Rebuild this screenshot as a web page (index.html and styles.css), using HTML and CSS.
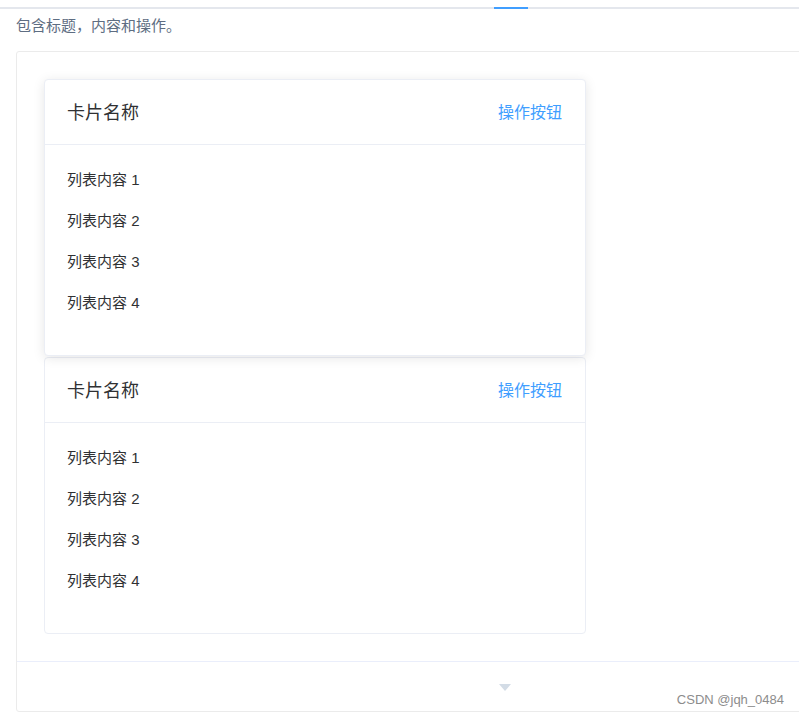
FILE: index.html
```html
<!DOCTYPE html>
<html lang="zh-CN">
<head>
<meta charset="utf-8">
<title>Card</title>
<link rel="stylesheet" href="styles.css">
</head>
<body>
<div class="tabs-bar"><span class="tab-ink"></span></div>
<p class="desc">包含标题，内容和操作。</p>
<div class="demo">
  <div class="source">
    <div class="card shadow">
      <div class="card-header">
        <span class="card-title">卡片名称</span>
        <span class="card-btn">操作按钮</span>
      </div>
      <div class="card-body">
        <div class="item">列表内容 1</div>
        <div class="item">列表内容 2</div>
        <div class="item">列表内容 3</div>
        <div class="item">列表内容 4</div>
      </div>
    </div>
    <div class="card second">
      <div class="card-header">
        <span class="card-title">卡片名称</span>
        <span class="card-btn">操作按钮</span>
      </div>
      <div class="card-body">
        <div class="item">列表内容 1</div>
        <div class="item">列表内容 2</div>
        <div class="item">列表内容 3</div>
        <div class="item">列表内容 4</div>
      </div>
    </div>
  </div>
  <div class="control"><span class="caret"></span></div>
</div>
<div class="watermark">CSDN @jqh_0484</div>
</body>
</html>
```
FILE: styles.css
```css
html, body {
  margin: 0;
  padding: 0;
  background: #fff;
  overflow: hidden;
}
body {
  font-family: "Liberation Sans", "Noto Sans CJK SC", sans-serif;
  color: #303133;
  width: 799px;
  height: 717px;
  position: relative;
}
.tabs-bar {
  height: 7px;
  border-bottom: 2px solid #e4e7ed;
  position: relative;
}
.tab-ink {
  position: absolute;
  left: 494px;
  bottom: -2px;
  width: 34px;
  height: 2px;
  background: #409eff;
}
.desc {
  margin: 6px 0 14px 16px;
  font-size: 15px;
  line-height: 22px;
  color: #5e6d82;
}
.demo {
  margin-left: 16px;
  width: 978px;
  box-sizing: border-box;
  border: 1px solid #ebebeb;
  border-radius: 3px;
}
.source {
  padding: 27px;
}
.card {
  width: 542px;
  box-sizing: border-box;
  border: 1px solid #ebeef5;
  border-radius: 4px;
  background: #fff;
  overflow: hidden;
}
.card.shadow {
  box-shadow: 0 2px 12px 0 rgba(0, 0, 0, 0.1);
  position: relative;
}
.card.second {
  margin-top: 1px;
}
.card-header {
  height: 62px;
  padding: 2px 22px 0;
  border-bottom: 1px solid #ebeef5;
  display: flex;
  align-items: center;
  justify-content: space-between;
}
.card-title {
  font-size: 18px;
  line-height: 28px;
  color: #303133;
}
.card-btn {
  font-size: 16px;
  line-height: 20px;
  color: #409eff;
  margin-right: 1px;
}
.card-body {
  padding: 23px 22px;
}
.item {
  font-size: 15px;
  line-height: 23px;
  height: 23px;
  margin-bottom: 18px;
  color: #303133;
}
.control {
  height: 49px;
  border-top: 1px solid #eaeefb;
  display: flex;
  align-items: center;
  justify-content: center;
}
.caret {
  width: 0;
  height: 0;
  border-left: 6px solid transparent;
  border-right: 6px solid transparent;
  border-top: 7px solid #d3dce6;
  margin-top: 2px;
}
.watermark {
  position: absolute;
  right: 15px;
  top: 692px;
  font-size: 13px;
  line-height: 15px;
  color: #8c8c8c;
}
```
